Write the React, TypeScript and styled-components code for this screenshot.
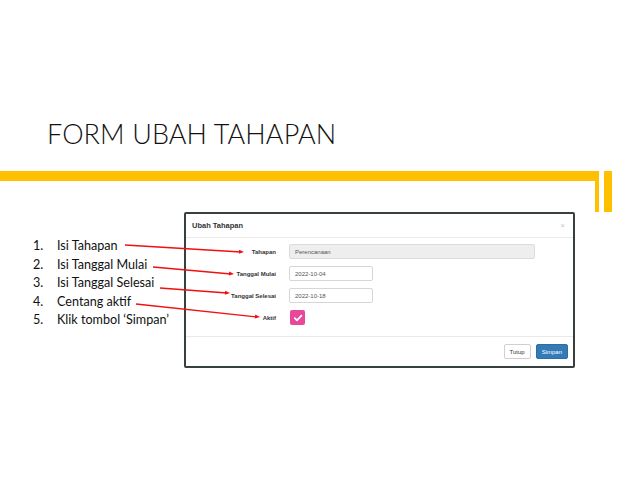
import styled, { createGlobalStyle } from "styled-components";

const GlobalStyle = createGlobalStyle`
  * { box-sizing: border-box; }
  body {
    margin: 0;
    background: #ffffff;
  }
`;

const Slide = styled.div`
  position: relative;
  width: 638px;
  height: 493px;
  overflow: hidden;
  background: #ffffff;
  font-family: Lato, "Open Sans", sans-serif;
`;

const Title = styled.h1`
  margin: 0;
  padding: 120px 0 0 47px;
  font-family: Lato, "Open Sans", sans-serif;
  font-weight: 300;
  font-size: 27px;
  line-height: 27px;
  color: #111111;
  letter-spacing: 0.1px;
`;

const Divider = styled.div`
  display: flex;
  align-items: flex-start;
  gap: 5px;
  margin-top: 24px;
  padding-right: 26px;
  height: 41px;
`;

const LongBar = styled.div`
  flex: 1;
  height: 41px;
  border-top: 10px solid #ffc000;
  border-right: 4px solid #ffc000;
`;

const ThickBar = styled.div`
  width: 8px;
  height: 41px;
  background: #ffc000;
`;

const Content = styled.div`
  display: flex;
  align-items: flex-start;
`;

const StepList = styled.ol`
  list-style: none;
  width: 184px;
  margin: 25px 0 0;
  padding: 0 0 0 33px;
`;

const Step = styled.li`
  display: flex;
  font-size: 12.6px;
  line-height: 18.5px;
  color: #111111;
`;

const StepNum = styled.span`
  width: 24px;
  flex-shrink: 0;
`;

const Dialog = styled.div`
  width: 391px;
  height: 156px;
  border: 2px solid #37403f;
  border-radius: 2px;
  background: #ffffff;
  font-family: "Liberation Sans", Arial, sans-serif;
  color: #333333;
  display: flex;
  flex-direction: column;
`;

const DialogHeader = styled.div`
  display: flex;
  align-items: center;
  justify-content: space-between;
  height: 24px;
  padding: 0 8px 0 6px;
  border-bottom: 1px solid #e9e9e9;
`;

const DialogTitle = styled.span`
  font-size: 7.5px;
  font-weight: bold;
  color: #333333;
`;

const CloseMark = styled.span`
  font-size: 8px;
  color: #c4c4c4;
  line-height: 1;
`;

const DialogBody = styled.div`
  display: flex;
  flex-direction: column;
  gap: 7px;
  padding: 6px 0 11px;
  border-bottom: 1px solid #e9e9e9;
`;

const FormRow = styled.div`
  display: flex;
  align-items: center;
  gap: 13px;
  height: 15px;
`;

const Label = styled.label`
  width: 90px;
  text-align: right;
  font-size: 6px;
  font-weight: bold;
  color: #333333;
`;

const Field = styled.div<{ $width: number; $disabled?: boolean }>`
  width: ${(p) => p.$width}px;
  height: 15px;
  display: flex;
  align-items: center;
  padding-left: 5px;
  font-size: 6px;
  color: #555555;
  background: ${(p) => (p.$disabled ? "#eeeeee" : "#ffffff")};
  border: 1px solid ${(p) => (p.$disabled ? "#dcdcdc" : "#d6d6d6")};
  border-radius: 2px;
`;

const CheckBox = styled.span`
  width: 15px;
  height: 15px;
  margin-left: 1px;
  display: flex;
  align-items: center;
  justify-content: center;
  background: #e8479a;
  border-radius: 2px;
`;

const DialogFooter = styled.div`
  display: flex;
  justify-content: flex-end;
  gap: 5px;
  padding: 7px 5px 0 0;
`;

const Button = styled.button<{ $primary?: boolean }>`
  height: 15px;
  padding: 0 5px;
  font-family: "Liberation Sans", Arial, sans-serif;
  font-size: 6px;
  color: ${(p) => (p.$primary ? "#ffffff" : "#333333")};
  background: ${(p) => (p.$primary ? "#337ab7" : "#ffffff")};
  border: 1px solid ${(p) => (p.$primary ? "#2e6da4" : "#d0d0d0")};
  border-radius: 2px;
`;

const ArrowLayer = styled.svg`
  position: absolute;
  left: 0;
  top: 0;
  pointer-events: none;
`;

const steps = [
  "Isi Tahapan",
  "Isi Tanggal Mulai",
  "Isi Tanggal Selesai",
  "Centang aktif",
  "Klik tombol \u2018Simpan\u2019",
];

const arrows = [
  { x1: 125, y1: 245, x2: 244, y2: 252 },
  { x1: 153, y1: 267, x2: 234, y2: 274 },
  { x1: 160, y1: 288, x2: 230, y2: 293 },
  { x1: 136, y1: 304, x2: 260, y2: 317 },
];

const head = (a: { x1: number; y1: number; x2: number; y2: number }) => {
  const dx = a.x2 - a.x1;
  const dy = a.y2 - a.y1;
  const len = Math.hypot(dx, dy);
  const ux = dx / len;
  const uy = dy / len;
  const bx = a.x2 - ux * 5;
  const by = a.y2 - uy * 5;
  const w = 2;
  return `${a.x2},${a.y2} ${bx - uy * w},${by + ux * w} ${bx + uy * w},${by - ux * w}`;
};

export default function App() {
  return (
    <>
      <GlobalStyle />
      <Slide>
        <Title>FORM UBAH TAHAPAN</Title>
        <Divider>
          <LongBar />
          <ThickBar />
        </Divider>
        <Content>
          <StepList>
            {steps.map((s, i) => (
              <Step key={s}>
                <StepNum>{i + 1}.</StepNum>
                {s}
              </Step>
            ))}
          </StepList>
          <Dialog>
            <DialogHeader>
              <DialogTitle>Ubah Tahapan</DialogTitle>
              <CloseMark>×</CloseMark>
            </DialogHeader>
            <DialogBody>
              <FormRow>
                <Label>Tahapan</Label>
                <Field $width={246} $disabled>Perencanaan</Field>
              </FormRow>
              <FormRow>
                <Label>Tanggal Mulai</Label>
                <Field $width={84}>2022-10-04</Field>
              </FormRow>
              <FormRow>
                <Label>Tanggal Selesai</Label>
                <Field $width={84}>2022-10-18</Field>
              </FormRow>
              <FormRow>
                <Label>Aktif</Label>
                <CheckBox>
                  <svg width="10" height="10" viewBox="0 0 10 10">
                    <path d="M1.8 5.2 L4 7.4 L8.4 2.6" fill="none" stroke="#ffffff" strokeWidth="1.8" strokeLinecap="round" strokeLinejoin="round" />
                  </svg>
                </CheckBox>
              </FormRow>
            </DialogBody>
            <DialogFooter>
              <Button>Tutup</Button>
              <Button $primary>Simpan</Button>
            </DialogFooter>
          </Dialog>
        </Content>
        <ArrowLayer width="638" height="493" viewBox="0 0 638 493">
          {arrows.map((a, i) => (
            <g key={i}>
              <line x1={a.x1} y1={a.y1} x2={a.x2 - 3} y2={a.y2} stroke="#f01010" strokeWidth="1.3" />
              <polygon points={head(a)} fill="#f01010" />
            </g>
          ))}
        </ArrowLayer>
      </Slide>
    </>
  );
}
